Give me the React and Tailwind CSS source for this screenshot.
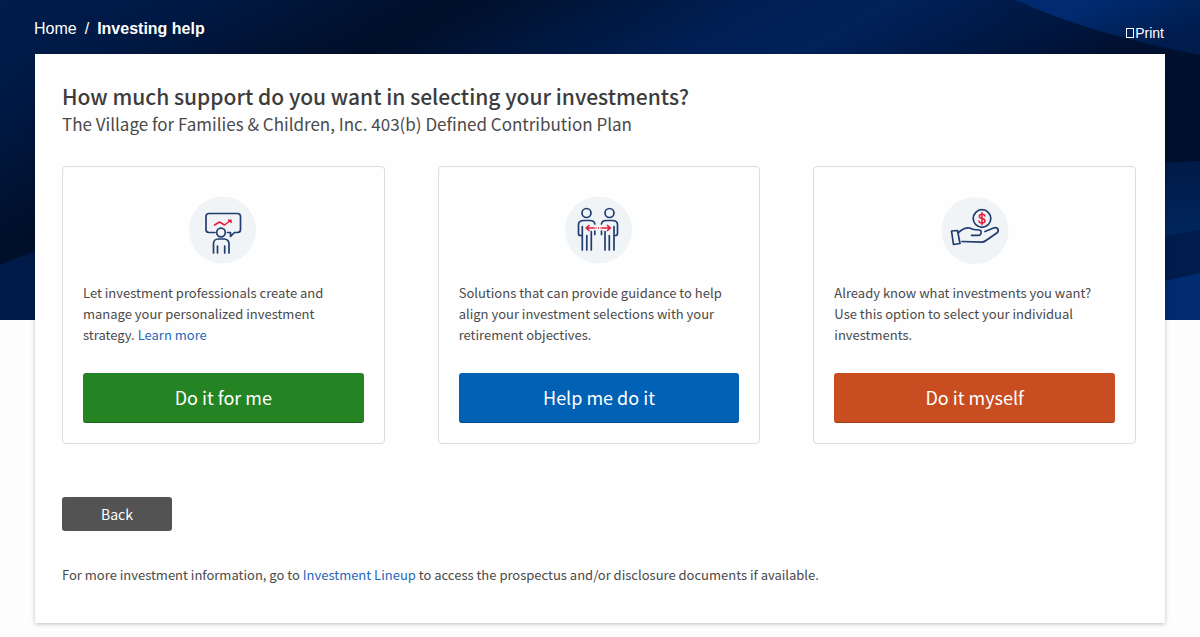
import React from 'react';

const OPTIONS = [
  {
    icon: ProfessionalIcon,
    text: 'Let investment professionals create and manage your personalized investment strategy.',
    link: 'Learn more',
    button: 'Do it for me',
    buttonClass: 'bg-[#248424] border-[#1a641a] hover:bg-[#1f721f]'
  },
  {
    icon: GuidanceIcon,
    text: 'Solutions that can provide guidance to help align your investment selections with your retirement objectives.',
    button: 'Help me do it',
    buttonClass: 'bg-[#0061b5] border-[#004a8c] hover:bg-[#00539b]'
  },
  {
    icon: MyselfIcon,
    text: 'Already know what investments you want? Use this option to select your individual investments.',
    button: 'Do it myself',
    buttonClass: 'bg-[#c84e22] border-[#a03c18] hover:bg-[#b0431c]'
  }
];

function ProfessionalIcon() {
  return (
    <svg viewBox="-1 0 90 80" className="w-[90px] h-20" fill="none" stroke="#213c70" strokeWidth="1.7" strokeLinecap="round" strokeLinejoin="round" aria-hidden="true">
      <circle cx="43.5" cy="40" r="33.5" fill="#f0f4f6" stroke="none" />
      <path d="M36 42.5H30a3 3 0 0 1-3-3V26.500a3 3 0 0 1 3-3H58.500a3 3 0 0 1 3 3V39.500a3 3 0 0 1-3 3H55.500L51.500 46.500V42.500H48.500" />
      <circle cx="42" cy="42.500" r="4.300" />
      <path d="M34.500 63V53.500a4.500 4.500 0 0 1 4.500-4.500H45.500a4.500 4.500 0 0 1 4.500 4.500V63M38.500 56V63M45.700 56V63" />
      <path d="M35.500 35L40.500 32L45.500 35L51.500 30.500M49.500 30.300H52V32.500" stroke="#e51b3c" strokeWidth="1.500" />
    </svg>
  );
}

function GuidanceIcon() {
  return (
    <svg viewBox="-1 0 90 80" className="w-[90px] h-20" fill="none" stroke="#213c70" strokeWidth="1.7" strokeLinecap="round" aria-hidden="true">
      <circle cx="43.5" cy="40" r="33.5" fill="#f0f4f6" stroke="none" />
      <circle cx="31.5" cy="23" r="4.5" />
      <circle cx="54.5" cy="23" r="4.5" />
      <path d="M27.300 60V36.500M31.800 60V45.500M36.300 60V41.500M27 45.500H25.500A2 2 0 0 1 23.500 43.500V34.500Q23.500 30.500 29 30.500H34.500Q39.500 30.500 39.800 34M39.800 41V44.500" />
      <path d="M50 60V41.500M54.300 60V45.500M59 60V36.500M59 45.500H60.500A2 2 0 0 0 62.500 43.500V34.500Q62.500 30.500 57 30.500H51.500Q46.800 30.500 46.500 34M46.500 41V44.500" />
      <path d="M31.500 38H39M47 38H55M34 35.500L31.300 38L34 40.500M52.500 35.500L55.200 38L52.500 40.500" stroke="#e51b3c" />
      <path d="M40.500 38H46" stroke="#e51b3c" strokeWidth="1.5" strokeDasharray="1 1.5" strokeLinecap="butt" />
    </svg>
  );
}

function MyselfIcon() {
  return (
    <svg viewBox="0 0 90 80" className="w-[90px] h-20" fill="none" stroke="#213c70" strokeWidth="1.7" strokeLinecap="round" strokeLinejoin="round" aria-hidden="true">
      <circle cx="45" cy="40.5" r="33.5" fill="#f0f4f6" stroke="none" />
      <circle cx="52" cy="28.5" r="8.8" />
      <path d="M55 26Q54.500 24.200 52 24.200Q49.300 24.200 49.300 26.300Q49.300 28 52 28.500Q55 29 55 31Q55 33 52 33Q49.200 33 48.900 31M52 22.500V34.700" stroke="#e51b3c" strokeWidth="1.5" />
      <path d="M21.500 41L27.500 40.500L30 53.500L23.500 54.500Z" />
      <path d="M28.500 42.500Q34 37.500 39.500 38Q43 40 49 40Q51.500 40 51 43Q50.800 45.300 48.500 45.300H41.500" />
      <path d="M32 51.500L51.500 52.200Q54 52.200 56 50.500L67.500 42.500Q69 40.500 67.500 38.500Q66 37 63.500 38L55 41.500" />
    </svg>
  );
}

function HeroBackground() {
  return (
    <svg viewBox="0 0 1200 320" preserveAspectRatio="none" className="absolute inset-x-0 top-0 w-full h-80" aria-hidden="true">
      <defs>
        <linearGradient id="base" gradientUnits="userSpaceOnUse" x1="0" y1="0" x2="332" y2="604">
          <stop offset="0" stopColor="#001c4c" />
          <stop offset="0.12" stopColor="#001a47" />
          <stop offset="0.32" stopColor="#000f29" />
          <stop offset="0.55" stopColor="#002056" />
          <stop offset="0.63" stopColor="#002159" />
          <stop offset="0.85" stopColor="#001030" />
          <stop offset="1" stopColor="#000f2b" />
        </linearGradient>
        <linearGradient id="wave" gradientUnits="userSpaceOnUse" x1="1100" y1="0" x2="1125" y2="60">
          <stop offset="0" stopColor="#002b70" />
          <stop offset="1" stopColor="#001c4c" />
        </linearGradient>
        <linearGradient id="edge" x1="0" y1="0" x2="0" y2="1">
          <stop offset="0" stopColor="#001a47" />
          <stop offset="1" stopColor="#00265f" />
        </linearGradient>
      </defs>
      <rect width="1200" height="320" fill="url(#base)" />
      <path d="M0 265Q18 257 40 250V320H0Z" fill="#001b49" />
      <path d="M1016 0Q1090 34 1200 55V0Z" fill="url(#wave)" />
      <path d="M1160 163L1200 161V230L1160 238Z" fill="url(#edge)" />
      <path d="M1160 238L1200 230V274L1160 282Z" fill="#001c4c" />
      <path d="M1160 282L1200 273V320H1160Z" fill="#002b70" />
    </svg>
  );
}

function OptionCard({ icon: Icon, text, link, button, buttonClass }) {
  return (
    <section className="flex flex-col border border-[#dcdcdc] rounded-sm px-5 pt-[23px] pb-5">
      <div className="flex justify-center">
        <Icon />
      </div>
      <p className="mt-3 mb-7 pr-2 text-[13px] leading-[21px]">
        {text}
        {link && <> <a href="#" className="text-[#1f68b8] hover:underline">{link}</a></>}
      </p>
      <button type="button" className={`mt-auto w-full h-[50px] pb-px rounded-[3px] border-b text-white text-[18px] leading-6 cursor-pointer ${buttonClass}`}>
        {button}
      </button>
    </section>
  );
}

export default function App() {
  return (
    <div className="relative isolate min-h-screen bg-[#fdfdfd] pb-3 text-[#4a4a4a] font-['Noto_Sans_CJK_SC',sans-serif]">
      <div className="absolute inset-0 -z-10">
        <HeroBackground />
      </div>

      <header className="flex justify-between pl-[34px] pr-9 pt-[18px] h-[54px] text-white font-['Liberation_Sans',sans-serif]">
        <nav aria-label="Breadcrumb" className="flex gap-2 pt-px text-[16px] leading-5">
          <a href="#" className="hover:underline">Home</a>
          <span>/</span>
          <span className="font-bold">Investing help</span>
        </nav>
        <a href="#" className="flex items-center gap-px text-[14px] leading-5 h-[30px] hover:underline">
          <span className="w-2 h-2.5 border border-white"></span>
          Print
        </a>
      </header>

      <main className="mx-[35px] pl-[27px] pr-[29px] pt-7 pb-9 bg-[#fefefe] shadow-[0_1px_4px_rgba(0,0,0,0.25)]">
        <h1 className="text-[21px] leading-7 font-medium text-[#3c3c3c]">How much support do you want in selecting your investments?</h1>
        <p className="text-[17px] leading-7">The Village for Families &amp; Children, Inc. 403(b) Defined Contribution Plan</p>

        <div className="grid grid-cols-3 gap-[53px] mt-7">
          {OPTIONS.map((option) => (
            <OptionCard key={option.button} {...option} />
          ))}
        </div>

        <button type="button" className="mt-[53px] w-[110px] h-[34px] pb-px rounded-[3px] bg-[#535353] hover:bg-[#404040] text-white text-[14px] leading-5 cursor-pointer">
          Back
        </button>

        <p className="mt-8 text-[13px] leading-6">
          For more investment information, go to <a href="#" className="text-[#1f68b8] hover:underline">Investment Lineup</a> to access the prospectus and/or disclosure documents if available.
        </p>
      </main>
    </div>
  );
}
